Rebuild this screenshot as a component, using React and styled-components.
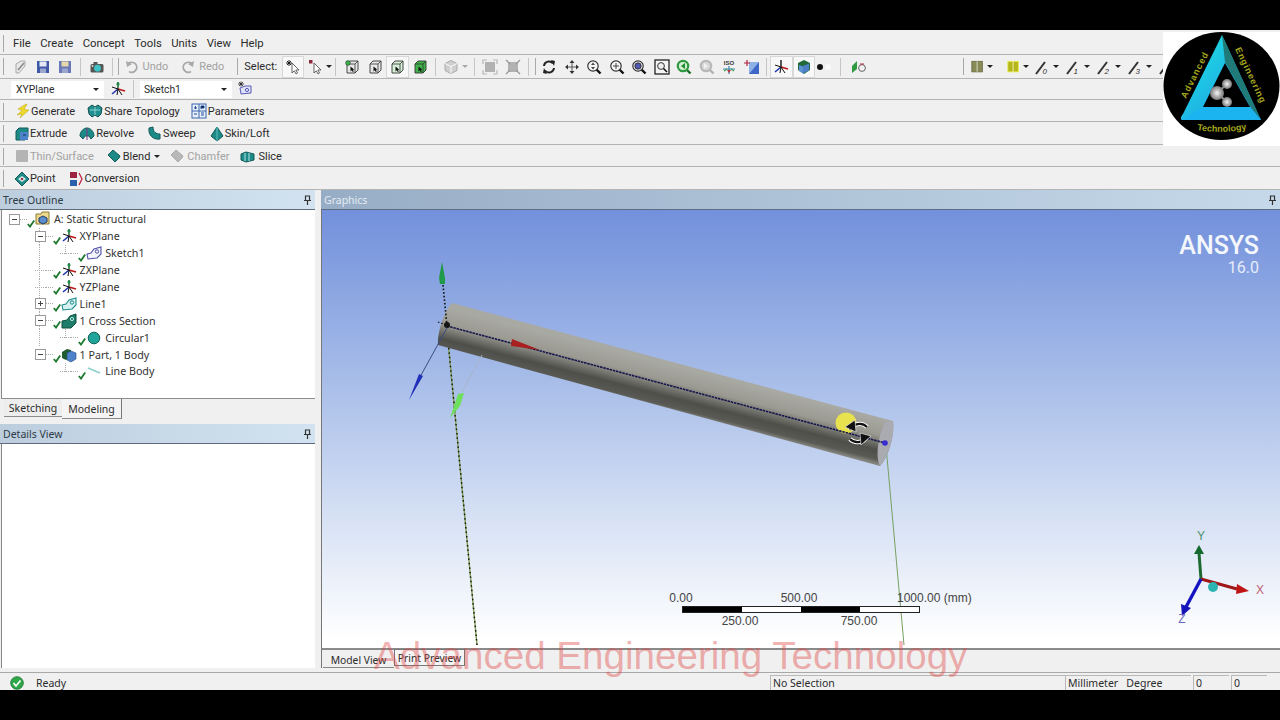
import React from 'react'
import styled, { createGlobalStyle } from 'styled-components'

const Global = createGlobalStyle`
  html, body { margin: 0; padding: 0; background: #000; }
  body { width: 1280px; height: 720px; overflow: hidden; font-family: "Noto Sans", "Open Sans", sans-serif; }
`

const Page = styled.div`
  position: relative;
  width: 1280px;
  height: 720px;
  display: flex;
  flex-direction: column;
  background: #000;
`
const Letterbox = styled.div`
  height: 30px;
  flex: none;
  background: #000;
`
const Win = styled.div`
  height: 660px;
  flex: none;
  display: flex;
  flex-direction: column;
  background: #f0f0f0;
  overflow: hidden;
  font-size: 11px;
  color: #2b2b2b;
`

/* toolbars */
const Bar = styled.div`
  height: ${p => p.h}px;
  flex: none;
  display: flex;
  align-items: center;
  padding-left: 3px;
  padding-top: ${p => p.pt || 0}px;
  box-sizing: border-box;
  border-bottom: 1px solid #b4b4b4;
  white-space: nowrap;
  overflow: hidden;
`
const Grip = styled.span`
  flex: none;
  width: 1px;
  height: 17px;
  background: #a8a8a8;
  margin-left: ${p => p.ml || 0}px;
  margin-right: ${p => p.mr || 0}px;
`
const Sep = styled.span`
  flex: none;
  width: 1px;
  height: 18px;
  background: #c6c6c6;
  margin: 0 ${p => p.m ?? 5}px;
`
const Slot = styled.span`
  flex: none;
  width: ${p => p.w || 22.5}px;
  height: 22px;
  margin-left: ${p => p.ml || 0}px;
  display: flex;
  align-items: center;
  justify-content: center;
  box-sizing: border-box;
  ${p => p.on && 'background: #f8f8f8; border: 1px solid #d8d8d8;'}
`
const Caret = styled.span`
  flex: none;
  width: 0;
  height: 0;
  margin-left: 3px;
  border: 3px solid transparent;
  border-top: 3px solid ${p => p.off ? '#a8a8a8' : '#222'};
  border-bottom: 0;
`
const Menu = styled.span`
  margin-left: ${p => p.ml || 9.5}px;
  font-family: Roboto, sans-serif;
  font-size: 11.3px;
`
const Btn = styled.span`
  flex: none;
  display: inline-flex;
  align-items: center;
  gap: ${p => p.gap ?? 2}px;
  margin-left: ${p => p.ml || 0}px;
  padding-top: ${p => p.pt || 0}px;
  color: ${p => p.off ? '#a2a2a2' : '#2b2b2b'};
  font-family: Roboto, sans-serif;
  font-size: 11px;
`
const Combo = styled.span`
  flex: none;
  width: ${p => p.w}px;
  height: 17px;
  margin-left: ${p => p.ml || 0}px;
  display: flex;
  align-items: center;
  justify-content: space-between;
  box-sizing: border-box;
  padding: 0 5px 0 ${p => p.pl || 4}px;
  background: #fff;
  font-family: Roboto, sans-serif;
  font-size: 10.3px;
`

/* panels */
const Main = styled.div`
  flex: 1;
  display: flex;
  min-height: 0;
`
const LeftCol = styled.div`
  width: 315px;
  flex: none;
  margin-right: 6px;
  display: flex;
  flex-direction: column;
`
const RightCol = styled.div`
  flex: 1;
  display: flex;
  flex-direction: column;
  min-width: 0;
`
const PanelHead = styled.div`
  height: 20px;
  flex: none;
  display: flex;
  align-items: center;
  justify-content: space-between;
  box-sizing: border-box;
  padding: 0 3px 0 3px;
  background: ${p => p.dark
    ? 'linear-gradient(90deg, #97adc5, #c6d9ea)'
    : 'linear-gradient(90deg, #bccede, #d2e2f0)'};
  color: ${p => p.dark ? '#e4ecf4' : '#2f3b47'};
  font-size: 10.5px;
  border-bottom: 1px solid ${p => p.dark ? '#5d6e84' : '#5f6b78'};
`
const TreeBox = styled.div`
  height: 188px;
  flex: none;
  margin-left: 1px;
  padding-top: 1px;
  background: #fff;
  box-sizing: border-box;
  border-left: 1px solid #888;
`
const Row = styled.div`
  position: relative;
  height: 16.9px;
  display: flex;
  align-items: center;
  padding-left: ${p => 7 + p.level * 25.6}px;
  font-size: 10.7px;
  color: #333;
`
const Expander = styled.span`
  flex: none;
  width: 11px;
  height: 11px;
  box-sizing: border-box;
  border: 1px solid #9a9a9a;
  background: #fff;
  position: relative;
  z-index: 1;
  &::before {
    content: '';
    position: absolute;
    left: 2px; right: 2px; top: 4px;
    height: 1px;
    background: #444;
  }
  ${p => p.plus && `&::after {
    content: '';
    position: absolute;
    top: 2px; bottom: 2px; left: 4px;
    width: 1px;
    background: #444;
  }`}
`
const Dash = styled.span`
  flex: none;
  width: ${p => p.w}px;
  height: 0;
  border-top: 1px dotted #aaa;
`
const Stem = styled.span`
  position: absolute;
  left: ${p => p.x}px;
  top: ${p => p.t || 0}px;
  height: ${p => p.h || 17}px;
  border-left: 1px dotted #aaa;
`
const RowLabel = styled.span`
  margin-left: 3px;
`
const TabStrip = styled.div`
  height: 20px;
  flex: none;
  display: flex;
  align-items: flex-start;
  margin-left: 1px;
  padding-left: 3px;
  border-top: 1px solid #8c8c8c;
`
const Tab = styled.span`
  box-sizing: border-box;
  height: ${p => p.sel ? 20 : 18}px;
  width: ${p => p.w}px;
  display: flex;
  align-items: center;
  justify-content: center;
  font-size: 10.5px;
  background: ${p => p.sel ? '#f4f4f4' : '#ededed'};
  border-bottom: 1px solid #8c8c8c;
  ${p => p.sel && 'border-right: 1px solid #777;'}
`
const DetailsBody = styled.div`
  flex: 1;
  margin-left: 1px;
  background: #fff;
  border-left: 1px solid #888;
`
const Gap = styled.div`
  height: 5px;
  flex: none;
`
const Viewport = styled.div`
  position: relative;
  height: 438px;
  flex: none;
  overflow: hidden;
  border-left: 1px solid #777;
  background: linear-gradient(#7290dc 0%, #a6bce8 38%, #d9e3f5 72%, #ffffff 98%);
`
const Scene = styled.svg`
  position: absolute;
  left: 0;
  top: 0;
  width: 959px;
  height: 435px;
`
const Brand = styled.div`
  position: absolute;
  right: 21px;
  top: 22px;
  text-align: right;
  color: #f4f7fc;
  font-family: Roboto, sans-serif;
  font-size: 25px;
  font-weight: 500;
  line-height: 27px;
  & small {
    display: block;
    color: #e4ecf8;
    font-size: 16px;
    font-weight: 400;
    line-height: 17px;
  }
`
const ScaleLabel = styled.span`
  position: absolute;
  left: ${p => p.x}px;
  top: ${p => p.y}px;
  transform: translateX(${p => p.center ? '-50%' : '0'});
  font-family: "Liberation Sans", sans-serif;
  font-size: 12px;
  color: #444;
  white-space: nowrap;
`
const ScaleBar = styled.div`
  position: absolute;
  left: 360px;
  top: 396px;
  display: flex;
  width: 238px;
  height: 7px;
  border: 1px solid #222;
  box-sizing: border-box;
`
const ScaleCell = styled.span`
  flex: 1;
  background: ${p => p.black ? '#000' : '#fff'};
`
const ViewTabs = styled.div`
  flex: 1;
  display: flex;
  align-items: flex-start;
  padding-left: 1px;
  border-left: 1px solid #777;
  border-top: 2px solid #8a8a8a;
`
const ViewTab = styled.span`
  box-sizing: border-box;
  height: ${p => p.sel ? 17 : 18}px;
  width: ${p => p.w}px;
  display: flex;
  align-items: center;
  justify-content: center;
  font-size: 10.3px;
  margin-top: ${p => p.sel ? -1 : 0}px;
  ${p => p.sel
    ? 'border: 1px solid #777; background: #f4f4f4;'
    : 'border-bottom: 1px solid #888; padding-top: 3px;'}
`

/* status bar */
const Status = styled.div`
  height: 17px;
  flex: none;
  margin-top: 4px;
  display: flex;
  align-items: flex-end;
  border-top: 1px solid #a8a8a8;
  font-size: 10.5px;
  position: relative;
`
const StatusCell = styled.span`
  flex: none;
  box-sizing: border-box;
  width: ${p => p.w}px;
  height: 15px;
  margin-left: ${p => p.ml || 0}px;
  padding-left: ${p => p.pl || 2}px;
  display: flex;
  align-items: center;
  gap: ${p => p.gap || 0}px;
  ${p => p.framed && 'border-top: 1px solid #b8b8b8; border-left: 1px solid #b8b8b8;'}
`

/* overlays */
const LogoWrap = styled.svg`
  position: absolute;
  left: 1163px;
  top: 32px;
  width: 117px;
  height: 114px;
  background: #fff;
`
const Watermark = styled.div`
  position: absolute;
  left: 374px;
  top: 634px;
  font-family: "Liberation Sans", sans-serif;
  font-size: 38.6px;
  line-height: 44px;
  color: rgba(224, 70, 70, 0.42);
  white-space: nowrap;
`

/* icons */
const Svg = ({ children, s = 16 }) => (
  <svg width={s} height={s} viewBox="0 0 16 16">{children}</svg>
)
const IcNew = () => <Svg><path d="M4 14 L4 5 L9 2 L13 2 L13 7 L7 14Z" fill="#e8e8e8" stroke="#a9a9a9"/><path d="M6 11l6-7" stroke="#8a8a8a" strokeWidth="1.6"/></Svg>
const IcSave = ({ tint }) => <Svg><rect x="2" y="2" width="12" height="12" fill={tint ? '#6a78b8' : '#3f59a8'}/><rect x="4.5" y="2.5" width="7" height="5" fill={tint ? '#e6d8a8' : '#e4e8f2'}/><rect x="5" y="9.5" width="6" height="4.5" fill="#9aa6cc"/></Svg>
const IcCamera = () => <Svg><rect x="1.5" y="5" width="13" height="8.5" rx="1.5" fill="#555"/><rect x="4.5" y="3" width="4" height="2.5" fill="#555"/><circle cx="8.5" cy="9.2" r="3.4" fill="#3cc3c6"/><circle cx="3.5" cy="7" r="0.9" fill="#ddd"/></Svg>
const IcUndo = ({ flip }) => <Svg><g transform={flip ? 'matrix(-1 0 0 1 16 0)' : undefined}><path d="M4.5 4.5A5 5 0 1 1 5 12.5" fill="none" stroke="#a8a8a8" strokeWidth="1.8"/><path d="M2 2l1 6 5-3z" fill="#a8a8a8"/></g></Svg>
const IcPick = ({ red }) => <Svg><path d="M7 4 L7 14 L9.3 11.8 L11 15 L12.5 14 L10.8 11 L14 11Z" fill="#fff" stroke="#555" strokeWidth="0.9"/>{red ? <rect x="2" y="1" width="3.5" height="3.5" fill="#8c2a3c"/> : <path d="M4 1v6M1 4h6M2 2l4 4M6 2l-4 4" stroke="#111" strokeWidth="0.9"/>}</Svg>
const IcBox = ({ fill, dot }) => <Svg><path d="M3 5 L6 2 L14 2 L14 11 L11 14 L3 14Z" fill={fill} stroke="#333" strokeWidth="0.9"/><path d="M3 5 L11 5 L14 2 M11 5 L11 14" fill="none" stroke="#333" strokeWidth="0.8"/>{dot && <circle cx="4" cy="4" r="2.4" fill="#38b04a" stroke="#222" strokeWidth="0.5"/>}<path d="M6.5 7.5v5l1.3-1.2 1 1.7 1-.6-1-1.6h1.7z" fill="#111"/></Svg>
const IcGreyCube = () => <Svg><path d="M8 1.5 L14 4.5 L14 11.5 L8 14.5 L2 11.5 L2 4.5Z" fill="#cfcfcf" stroke="#aaa"/><path d="M2 4.5 L8 7.5 L14 4.5 M8 7.5V14.5" fill="none" stroke="#fafafa"/></Svg>
const IcFrame = ({ x }) => <Svg><rect x="3" y="3" width="10" height="10" fill="#b2b2b2"/>{x ? <path d="M1 1l4 4M15 1l-4 4M1 15l4-4M15 15l-4-4" stroke="#999" strokeWidth="1.3"/> : <path d="M1 5V1h4M11 1h4v4M15 11v4h-4M5 15H1v-4" fill="none" stroke="#b8b8b8" strokeWidth="1.2"/>}</Svg>
const IcRotate = () => <Svg><path d="M3 7A5 5 0 0 1 12 4.5" fill="none" stroke="#222" strokeWidth="2"/><path d="M13 9A5 5 0 0 1 4 11.5" fill="none" stroke="#222" strokeWidth="2"/><path d="M10 1l4 1-1 5zM6 15l-4-1 1-5z" fill="#222"/></Svg>
const IcPan = () => <Svg><path d="M8 1l2.5 3h-5zM8 15l2.5-3h-5zM1 8l3-2.5v5zM15 8l-3-2.5v5z" fill="#333"/><path d="M8 4v8M4 8h8" stroke="#555" strokeWidth="1"/></Svg>
const IcZoom = ({ kind }) => {
  const green = kind === 'green'
  const grey = kind === 'grey'
  const ring = green ? '#2f9a3f' : grey ? '#b8b8b8' : '#333'
  return <Svg>
    <path d="M10 10l4.5 4.5" stroke={grey ? '#b0b0b0' : green ? '#1d6a2a' : '#111'} strokeWidth="2.4"/>
    <circle cx="7" cy="7" r="5.2" fill={green ? '#d4f0d4' : grey ? '#d8d8d8' : '#f5f5f5'} stroke={ring} strokeWidth={green || grey ? 2.2 : 1.2}/>
    {kind === 'updown' && <path d="M7 3.5l2 2.4H5zM7 10.5l2-2.4H5z" fill="#444"/>}
    {kind === 'plus' && <path d="M7 4v6M4 7h6" stroke="#444"/>}
    {kind === 'target' && <circle cx="7" cy="7" r="3.2" fill="#5058b0" stroke="#222" strokeWidth="0.8"/>}
    {green && <path d="M9 4l-4 3 4 3z" fill="#1f8a30"/>}
    {grey && <path d="M5 4l4 3-4 3z" fill="#f2f2f2"/>}
  </Svg>
}
const IcZoomBox = () => <Svg><rect x="1" y="1" width="14" height="14" fill="#f4f4f4" stroke="#111" strokeWidth="1.2"/><circle cx="7" cy="7" r="3.4" fill="#eee" stroke="#333"/><path d="M9.5 9.5l3.5 3.5" stroke="#111" strokeWidth="1.6"/></Svg>
const IcIso = () => <Svg><text x="8" y="6" fontSize="6" fontWeight="700" fontFamily="Liberation Sans" textAnchor="middle" fill="#333">ISO</text><path d="M2 10h12M8 7v8" stroke="#3b86b0" strokeWidth="1.2"/><path d="M3 12l3-2 M13 12l-3-2" stroke="#3aa050" strokeWidth="1.3"/><path d="M8 14l-2-3h4z" fill="#c03040"/></Svg>
const IcLook = () => <Svg><rect x="5" y="3" width="10" height="12" fill="#3f67c8"/><path d="M15 3L5 15V3z" fill="#8fb2e6"/><path d="M0 4h6M3 1v6" stroke="#b02040" strokeWidth="1.2"/></Svg>
const IcAxes = ({ s = 16, noGreen }) => <Svg s={s}><path d="M8 8L8 1" stroke={noGreen ? '#222' : '#1d6a38'} strokeWidth="1.5"/><circle cx="8" cy="3" r="1.6" fill={noGreen ? 'none' : '#1f8a48'}/><path d="M8 8L2 13" stroke="#2233b0" strokeWidth="1.6"/><path d="M8 8L15 10" stroke="#c01818" strokeWidth="1.8"/><path d="M2 6l6 2 4 6M8 8l-1 6" stroke="#111" strokeWidth="1" fill="none"/></Svg>
const IcBoxFill = () => <Svg><path d="M8 1L14 4v7L8 15 2 11V4z" fill="#1f6a38"/><path d="M7 7l6-2.5v7L7 14.5z" fill="#4d7fc6"/><path d="M3 6l4 1.5v7L3 12z" fill="#5b93d2"/></Svg>
const Dots = () => <Svg><circle cx="4" cy="8" r="3" fill="#111"/><circle cx="12" cy="8" r="3" fill="#fafafa"/></Svg>
const IcLeaf = () => <Svg><path d="M1 14 L1 7 L6 2 L6 10Z" fill="#2f9a3f"/><circle cx="11" cy="9" r="3.4" fill="none" stroke="#666"/><path d="M9 5l4 0" stroke="#b0264a"/></Svg>
const Panes = ({ olive, bright }) => <Svg s={14}><rect x="1" y="1" width="13" height="13" fill={bright ? '#b6b61c' : olive ? '#878a55' : '#888'} stroke={bright ? '#e8ef50' : '#6a6a45'}/><path d="M7.5 1v13" stroke={bright ? '#f0f0b0' : '#d8d8c0'} strokeWidth="1.2"/></Svg>
const Slice = ({ n }) => <Svg><path d="M2 15L11 3" stroke="#333" strokeWidth="2"/><text x="8.5" y="14.5" fontSize="8" fontFamily="Liberation Sans" fontStyle="italic" fill="#333">{n}</text></Svg>
const IcNewSketch = () => <Svg><path d="M3 7l5-2 6 0 0 7-10 1z" fill="#dfe2f7" stroke="#5a5ab8"/><path d="M1 3h6M4 0.5v5M2 1l4 4M6 1L2 5" stroke="#222" strokeWidth="0.8"/><circle cx="10" cy="9" r="1.6" fill="none" stroke="#5a5ab8"/></Svg>
const IcBolt = () => <Svg><path d="M11 1L3 6l4 1.5L2 12l5-1-2 4 9-8-5-.5 3-5z" fill="#efd92c" stroke="#b8a015" strokeWidth="0.5"/></Svg>
const IcShare = () => <Svg><path d="M1 5l4-3 3 2 3-2 4 3-1 6-3 3-3-2-3 2-3-3z" fill="#1f8f8f" stroke="#174e4e"/><path d="M8 4v8M3 7l10 0" stroke="#a8e0e0" strokeWidth="0.8"/></Svg>
const IcParams = () => <Svg><rect x="1" y="1" width="14" height="14" fill="#e8f0fa" stroke="#3b64ad"/><path d="M1 8h14M8 1v14" stroke="#3b64ad"/><path d="M3 5h3M4.5 3v3M10 3h3v2h-3M10 3v3M3 11h3M10 10h3M10 12h3" stroke="#1f4aa0"/></Svg>
const IcExtrude = () => <Svg><path d="M2 5l3-3h9v9l-3 3H2z" fill="#1e8a88" stroke="#135a58"/><path d="M6 6h8v8H6z" fill="#4b82c8"/><path d="M9 9h3" stroke="#0d2f66"/></Svg>
const IcRevolve = () => <Svg><path d="M1 10C1 5 5 2 8 2s7 3 7 8l-3 3-2-3H6l-2 3z" fill="#1e8a88" stroke="#135a58"/><path d="M8 2v12" stroke="#7a3c86"/></Svg>
const IcSweep = () => <Svg><path d="M3 2l4-1c0 5 3 7 7 7v5c-7 1-12-4-11-11z" fill="#1e8a88" stroke="#135a58"/></Svg>
const IcLoft = () => <Svg><path d="M8 1l6 9-6 5-6-5z" fill="#1e8a88" stroke="#135a58"/><path d="M8 1v14" stroke="#5cc2c0"/></Svg>
const IcThin = () => <Svg><rect x="2" y="2" width="12" height="12" rx="1" fill="#b4b4b4"/></Svg>
const IcBlend = ({ off }) => <Svg><path d="M2 7l5-5 7 6-1 2-4 4z" fill={off ? '#b8b8b8' : '#1e8a88'} stroke={off ? '#aaa' : '#135a58'}/></Svg>
const IcSlice = () => <Svg><path d="M1 6l5-2 8 2v6l-8 2-5-2z" fill="#1e8a88" stroke="#135a58"/><path d="M5 5v8M9 5v8" stroke="#b0e6e4"/></Svg>
const IcPoint = () => <Svg><path d="M8 1l7 7-7 7-7-7z" fill="#1e8a88" stroke="#135a58"/><path d="M4 8l4-3 4 3-4 3z" fill="#d8efe8"/><circle cx="8" cy="8" r="1.3" fill="#a03050"/></Svg>
const IcConvert = () => <Svg><rect x="2" y="1" width="7" height="6" fill="#9c2440"/><rect x="2" y="9" width="7" height="6" fill="#2a60ac"/><path d="M11 2l3 6-3 6" fill="none" stroke="#c02040" strokeWidth="1.3"/></Svg>
const IcCheck = () => <svg width="8" height="9" viewBox="0 0 8 9" style={{ alignSelf: 'flex-end' }}><path d="M0.8 5 L3 7.6 L7.2 1.4" fill="none" stroke="#1f7a30" strokeWidth="1.8"/></svg>
const IcRoot = () => <Svg><path d="M1 3h5l1-2h7v12H1z" fill="#ecd98e" stroke="#8a7a30"/><path d="M8 5l4 2v4l-4 2-4-2V7z" fill="#5a8ecf" stroke="#223a68"/></Svg>
const IcSketch = ({ teal }) => <Svg><path d="M1 9l4-1 3-4 7-2v7l-4 4-9 1z" fill={teal ? '#d8f2f2' : '#f2f3fb'} stroke={teal ? '#1d8a88' : '#5050a8'} strokeWidth="1.1"/><circle cx="11" cy="6.5" r="1.7" fill="none" stroke={teal ? '#1d8a88' : '#5050a8'}/></Svg>
const IcSection = () => <Svg><path d="M1 8l5-1 3-4 6-2v9l-5 5H1z" fill="#1d7d6a" stroke="#105040"/><circle cx="11" cy="6" r="1.6" fill="none" stroke="#bfe8df"/></Svg>
const IcCircle = () => <Svg><circle cx="8" cy="8" r="5.8" fill="#1fa59a" stroke="#0f6258"/></Svg>
const IcBody = () => <Svg><path d="M1 5l5-3 4 1v7l-5 3-4-2z" fill="#1f5c2f"/><path d="M6 6l4-2 5 2v6l-5 3-4-2z" fill="#4c82cc" stroke="#264a80" strokeWidth="0.6"/></Svg>
const IcLine = () => <Svg><path d="M2 5L14 10" stroke="#8ed0ca" strokeWidth="1.8"/></Svg>
const IcPin = () => <svg width="9" height="10" viewBox="0 0 9 10"><path d="M2.5 1h4v4.5H2.5zM1 5.5h7M4.5 5.5V10" fill="none" stroke="#333" strokeWidth="1.2"/></svg>
const IcReady = () => <svg width="14" height="14" viewBox="0 0 14 14"><circle cx="7" cy="7" r="6.3" fill="#2fa84a" stroke="#1c6e30" strokeWidth="0.8"/><path d="M3.5 7l2.5 3 4.5-5.5" fill="none" stroke="#fff" strokeWidth="1.7"/></svg>

const Tree = [
  { level: 0, name: 'A: Static Structural', icon: <IcRoot />, exp: 'minus' },
  { level: 1, name: 'XYPlane', icon: <IcAxes />, exp: 'minus' },
  { level: 2, name: 'Sketch1', icon: <IcSketch /> },
  { level: 1, name: 'ZXPlane', icon: <IcAxes /> },
  { level: 1, name: 'YZPlane', icon: <IcAxes /> },
  { level: 1, name: 'Line1', icon: <IcSketch teal />, exp: 'plus' },
  { level: 1, name: '1 Cross Section', icon: <IcSection />, exp: 'minus' },
  { level: 2, name: 'Circular1', icon: <IcCircle /> },
  { level: 1, name: '1 Part, 1 Body', icon: <IcBody />, exp: 'minus' },
  { level: 2, name: 'Line Body', icon: <IcLine /> },
]

function TreeRow({ row, i }) {
  const { level, name, icon, exp } = row
  return (
    <Row level={level}>
      {level === 1 && i < 8 && <Stem x={37} />}
      {level === 2 && <Stem x={63} h={9} />}
      {level === 2 && i < 9 && <Stem x={37} />}
      {exp
        ? <Expander plus={exp === 'plus'} />
        : level === 0 ? null : <Dash w={11} />}
      <Dash w={7} />
      <IcCheck />
      {icon}
      <RowLabel>{name}</RowLabel>
    </Row>
  )
}

function Viewer() {
  return (
    <Viewport>
      <Scene viewBox="322 210 959 435">
        <defs>
          <linearGradient id="rod" gradientUnits="userSpaceOnUse" x1="658" y1="362" x2="647" y2="405">
            <stop offset="0" stopColor="#a9a9a3" />
            <stop offset="0.36" stopColor="#9a9a92" />
            <stop offset="0.7" stopColor="#4e4e4a" />
            <stop offset="0.9" stopColor="#5a5a55" />
            <stop offset="1" stopColor="#85857f" />
          </linearGradient>
        </defs>
        <path d="M477 645 L447 330" stroke="#7e9a50" strokeWidth="1.4" />
        <path d="M477 645 L447 330" stroke="#111" strokeWidth="1.4" strokeDasharray="1.5 3" />
        <path d="M904 645 L886 446" stroke="#76a060" strokeWidth="1" />
        <path d="M452 303 L893 421 C895 432 889 456 880 466 L438 345 C437 335 443 312 452 303Z" fill="url(#rod)" />
        <path d="M886 421 L893 422 C895 434 889 456 880 466 C875 458 878 434 886 421Z" fill="#a9abb0" />
        <circle cx="846" cy="423" r="10.5" fill="#e8e24e" />
        <path d="M447 326 L885 443" stroke="#16164e" strokeWidth="1.6" strokeDasharray="2.5 0.8" />
        <path d="M512 339 L540 350 L511 346Z" fill="#a82020" />
        <path d="M443 285 L447 326" stroke="#111" strokeWidth="1.6" strokeDasharray="1.6 2" />
        <path d="M442 262 L445 278 L445 284 L440 284 L439 278Z" fill="#1f9a48" />
        <path d="M438 322 L447 325" stroke="#111" strokeWidth="1.2" strokeDasharray="1.5 2" />
        <circle cx="447" cy="325" r="3" fill="#141414" />
        <path d="M447 328 L420 377" stroke="#3c4c80" strokeWidth="1" />
        <path d="M409 400 L419 374 L423 376Z" fill="#2030b8" />
        <path d="M482 355 L462 392" stroke="#a8b4c8" strokeWidth="1" />
        <path d="M450 418 L458 394 L464 393 L460 406Z" fill="#6fe05e" />
        <circle cx="885" cy="443" r="2.8" fill="#3a2cd0" />
        <path d="M850 430 A10 9 0 0 1 867 427" fill="none" stroke="#fff" strokeWidth="4.4" />
        <path d="M850 430 A10 9 0 0 1 867 427" fill="none" stroke="#111" strokeWidth="2.2" />
        <path d="M845 427 L855 420 L856 432Z" fill="#111" stroke="#fff" strokeWidth="0.6" />
        <path d="M850 439 A10 9 0 0 0 867 436" fill="none" stroke="#fff" strokeWidth="4.4" />
        <path d="M850 439 A10 9 0 0 0 867 436" fill="none" stroke="#111" strokeWidth="2.2" />
        <path d="M871 436 L861 445 L860 433Z" fill="#111" stroke="#fff" strokeWidth="0.6" />

        <path d="M1201 579 L1199 553" stroke="#1c6a30" strokeWidth="3" />
        <path d="M1199 545 L1204 554 L1194 554Z" fill="#146a2c" />
        <path d="M1201 579 L1237 589" stroke="#a01818" strokeWidth="3" />
        <path d="M1249 591 L1236 594 L1237 584Z" fill="#c01414" />
        <path d="M1201 579 L1186 607" stroke="#1414c0" strokeWidth="3.4" />
        <path d="M1182 616 L1181 604 L1191 608Z" fill="#1414b8" />
        <circle cx="1213" cy="587" r="5" fill="#2cb4b0" />
        <text x="1201" y="540" fontSize="12" fontFamily="Liberation Sans" fill="#4f9070" textAnchor="middle">Y</text>
        <text x="1260" y="594" fontSize="12" fontFamily="Liberation Sans" fill="#c06070" textAnchor="middle">X</text>
        <text x="1182" y="623" fontSize="12" fontFamily="Liberation Sans" fill="#6a6ac0" textAnchor="middle">Z</text>
      </Scene>
      <Brand>ANSYS<small>16.0</small></Brand>
      <ScaleLabel center x={359} y={381}>0.00</ScaleLabel>
      <ScaleLabel center x={477} y={381}>500.00</ScaleLabel>
      <ScaleLabel x={575} y={381}>1000.00 (mm)</ScaleLabel>
      <ScaleBar>
        <ScaleCell black /><ScaleCell /><ScaleCell black /><ScaleCell />
      </ScaleBar>
      <ScaleLabel center x={418} y={404}>250.00</ScaleLabel>
      <ScaleLabel center x={537} y={404}>750.00</ScaleLabel>
    </Viewport>
  )
}

function Logo() {
  return (
    <LogoWrap viewBox="0 0 117 114">
      <defs>
        <linearGradient id="tri" x1="0" y1="0" x2="1" y2="1">
          <stop offset="0" stopColor="#1fe8e0" />
          <stop offset="1" stopColor="#1d8fe8" />
        </linearGradient>
        <radialGradient id="ball">
          <stop offset="0" stopColor="#f4f4f4" />
          <stop offset="1" stopColor="#777" />
        </radialGradient>
        <path id="la" d="M23 67 L46 21" />
        <path id="lb" d="M72 17 L98 72" />
        <path id="lc" d="M34 98 Q59 102 86 97" />
      </defs>
      <ellipse cx="58.5" cy="54" rx="58" ry="54" fill="#000" />
      <path d="M59 3 L98 88 L19 88 C17 88 18 84 20 82Z" fill="url(#tri)" />
      <path d="M59 3 L98 88 L88 76 L62 30Z" fill="#1f7a78" />
      <path d="M19 88 L98 88 L87 75 L40 75Z" fill="#1cb4f0" />
      <path d="M62 31 L87 75 L40 75Z" fill="#000" />
      <path d="M54 61 L64 52 M54 61 L64 70" stroke="#999" strokeWidth="2" />
      <circle cx="54" cy="61" r="7" fill="url(#ball)" />
      <circle cx="64" cy="52" r="5" fill="url(#ball)" />
      <circle cx="64" cy="70" r="5" fill="url(#ball)" />
      <text fontFamily="Liberation Sans" fontSize="9" fontWeight="700" fill="#a6a81e"><textPath href="#la" textLength="50">Advanced</textPath></text>
      <text fontFamily="Liberation Sans" fontSize="9" fontWeight="700" fill="#a6a81e"><textPath href="#lb" textLength="60">Engineering</textPath></text>
      <text fontFamily="Liberation Sans" fontSize="9" fontWeight="700" fill="#a6a81e"><textPath href="#lc" textLength="50">Technology</textPath></text>
    </LogoWrap>
  )
}

export default function App() {
  return (
    <Page>
      <Global />
      <Letterbox />
      <Win>
        <Bar h={25} pt={3}>
          <Grip />
          <Menu ml={9}>File</Menu><Menu>Create</Menu><Menu>Concept</Menu><Menu>Tools</Menu>
          <Menu>Units</Menu><Menu>View</Menu><Menu>Help</Menu>
        </Bar>
        <Bar h={24}>
          <Grip mr={5} />
          <Slot><IcNew /></Slot><Slot><IcSave /></Slot><Slot><IcSave tint /></Slot>
          <Sep m={3} />
          <Slot w={26}><IcCamera /></Slot>
          <Sep m={2} /><Grip ml={3} mr={4} />
          <Btn off ml={1} gap={3}><IcUndo />Undo</Btn>
          <Btn off ml={12} gap={3}><IcUndo flip />Redo</Btn>
          <Grip ml={13} mr={6} />
          <Btn>Select:</Btn>
          <Slot on w={22} ml={5}><IcPick /></Slot>
          <Slot w={30}><IcPick red /><Caret /></Slot>
          <Sep m={1} />
          <Slot ml={4}><IcBox fill="#e8e8e8" dot /></Slot><Slot><IcBox fill="#e8e8e8" /></Slot>
          <Slot on><IcBox fill="#d8f0d8" /></Slot><Slot><IcBox fill="#3fb24a" /></Slot>
          <Sep m={4} />
          <Slot w={30}><IcGreyCube /><Caret off /></Slot>
          <Sep m={4} />
          <Slot><IcFrame /></Slot><Slot><IcFrame x /></Slot>
          <Sep m={4} /><Grip ml={2} mr={2} />
          <Slot><IcRotate /></Slot><Slot><IcPan /></Slot><Slot><IcZoom kind="updown" /></Slot>
          <Slot><IcZoom kind="plus" /></Slot><Slot><IcZoom kind="target" /></Slot><Slot><IcZoomBox /></Slot>
          <Slot><IcZoom kind="green" /></Slot><Slot><IcZoom kind="grey" /></Slot><Slot><IcIso /></Slot><Slot><IcLook /></Slot>
          <Sep m={3} />
          <Slot on><IcAxes noGreen /></Slot><Slot on><IcBoxFill /></Slot><Slot w={18}><Dots /></Slot>
          <Sep m={7} />
          <Slot><IcLeaf /></Slot>
          <Slot w={88} />
          <Grip ml={4} mr={7} />
          <Slot w={22}><Panes olive /><Caret /></Slot>
          <Slot w={14} />
          <Slot w={22}><Panes bright /><Caret /></Slot>
          <Slot w={5} />
          <Slot w={26}><Slice n="0" /><Caret /></Slot><Slot w={5} />
          <Slot w={26}><Slice n="1" /><Caret /></Slot><Slot w={5} />
          <Slot w={26}><Slice n="2" /><Caret /></Slot><Slot w={5} />
          <Slot w={26}><Slice n="3" /><Caret /></Slot><Slot w={5} />
          <Slot w={26}><Slice n="4" /><Caret /></Slot>
        </Bar>
        <Bar h={21}>
          <Combo w={93} ml={8} pl={5}>XYPlane<Caret /></Combo>
          <Slot w={28}><IcAxes /></Slot>
          <Sep m={1} />
          <Combo w={92} ml={5}>Sketch1<Caret /></Combo>
          <Slot w={26}><IcNewSketch /></Slot>
        </Bar>
        <Bar h={22} pt={1}>
          <Grip mr={11} />
          <Btn gap={0}>
            <IcBolt />Generate
          </Btn>
          <Btn ml={12} gap={1}><IcShare />Share Topology</Btn>
          <Btn ml={11} gap={1}><IcParams />Parameters</Btn>
        </Bar>
        <Bar h={23} pt={1}>
          <Grip mr={10} />
          <Btn gap={0}><IcExtrude />Extrude</Btn>
          <Btn ml={12} gap={1}><IcRevolve />Revolve</Btn>
          <Btn ml={12} gap={1}><IcSweep />Sweep</Btn>
          <Btn ml={13} gap={0}><IcLoft />Skin/Loft</Btn>
        </Bar>
        <Bar h={22} pt={1}>
          <Grip mr={10} />
          <Btn off gap={0}><IcThin />Thin/Surface</Btn>
          <Btn ml={12} gap={1}><IcBlend />Blend<Caret /></Btn>
          <Btn off ml={9} gap={2}><IcBlend off />Chamfer</Btn>
          <Btn ml={11} gap={2}><IcSlice />Slice</Btn>
        </Bar>
        <Bar h={23} pt={1}>
          <Grip mr={10} />
          <Btn gap={0}><IcPoint />Point</Btn>
          <Btn ml={12} gap={1}><IcConvert />Conversion</Btn>
        </Bar>
        <Main>
          <LeftCol>
            <PanelHead>Tree Outline<IcPin /></PanelHead>
            <TreeBox>
              {Tree.map((row, i) => <TreeRow key={row.name} row={row} i={i} />)}
            </TreeBox>
            <TabStrip>
              <Tab w={58}>Sketching</Tab>
              <Tab sel w={60}>Modeling</Tab>
            </TabStrip>
            <Gap />
            <PanelHead>Details View<IcPin /></PanelHead>
            <DetailsBody />
          </LeftCol>
          <RightCol>
            <PanelHead dark>Graphics<IcPin /></PanelHead>
            <Viewer />
            <ViewTabs>
              <ViewTab w={71}>Model View</ViewTab>
              <ViewTab sel w={71}>Print Preview</ViewTab>
            </ViewTabs>
          </RightCol>
        </Main>
        <Status>
          <StatusCell w={770} pl={10} gap={12}><IcReady />Ready</StatusCell>
          <StatusCell framed w={295}>No Selection</StatusCell>
          <StatusCell framed w={126}>Millimeter&nbsp;&nbsp;&nbsp;Degree</StatusCell>
          <StatusCell framed ml={2} w={36}>0</StatusCell>
          <StatusCell framed ml={2} w={36}>0</StatusCell>
        </Status>
      </Win>
      <Letterbox />
      <Logo />
      <Watermark>Advanced Engineering Technology</Watermark>
    </Page>
  )
}
